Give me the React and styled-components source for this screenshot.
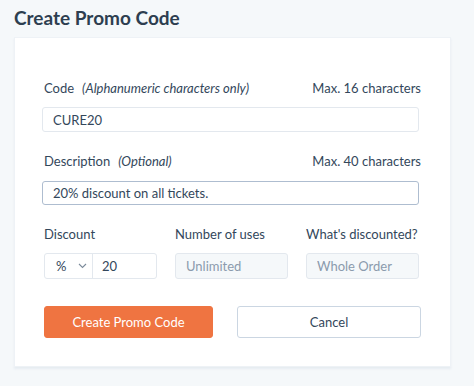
import React from 'react'
import styled, { createGlobalStyle } from 'styled-components'

const GlobalStyle = createGlobalStyle`
  body {
    margin: 0;
    background: #f5f8fa;
    font-family: Lato, "Open Sans", sans-serif;
    color: #33475b;
  }
`

const Page = styled.main`
  padding: 6px 23px 19px 14px;
`

const Title = styled.h1`
  margin: 0 0 7px;
  font-size: 19px;
  font-weight: 700;
  color: #2d3e50;
  line-height: 24px;
`

const Card = styled.section`
  background: #fff;
  border: 1px solid #eef2f6;
  box-shadow: 0 2px 2px rgba(203, 214, 226, 0.35);
  padding: 42px 29px 28px 27px;
  display: flex;
  flex-direction: column;
`

const Field = styled.div`
  display: flex;
  flex-direction: column;
  gap: ${(p) => p.gap || 11}px;
  margin-bottom: 21px;
`

const LabelRow = styled.div`
  display: flex;
  justify-content: space-between;
  padding-left: 2px;
  font-size: 13px;
  line-height: 16px;
`

const Hint = styled.em`
  margin-left: 8px;
  font-style: italic;
`

const Input = styled.input`
  box-sizing: border-box;
  width: ${(p) => (p.narrow ? '100%' : '377px')};
  height: ${(p) => p.h || 25}px;
  border: 1px solid ${(p) => (p.focused ? '#aebdd0' : '#e3e8ee')};
  border-radius: 3px;
  background: ${(p) => (p.disabled ? '#f5f8fa' : '#fff')};
  color: ${(p) => (p.disabled ? '#8b9bad' : '#33475b')};
  font-family: inherit;
  font-size: 13px;
  padding: 0 10px;
  outline: none;
  &:disabled {
    -webkit-text-fill-color: #8b9bad;
    opacity: 1;
  }
`

const Grid = styled.div`
  display: grid;
  grid-template-columns: 113px 113px 113px;
  column-gap: 18px;
  margin-left: 2px;
  margin-bottom: 27px;
`

const Col = styled.div`
  display: flex;
  flex-direction: column;
  gap: 11px;
`

const ColLabel = styled.div`
  font-size: 13px;
  line-height: 16px;
`

const Combo = styled.div`
  display: flex;
  height: 26px;
  box-sizing: border-box;
  border: 1px solid #e3e8ee;
  border-radius: 3px;
`

const Select = styled.div`
  width: 48px;
  box-sizing: border-box;
  border-right: 1px solid #e3e8ee;
  display: flex;
  align-items: center;
  justify-content: space-between;
  padding: 0 5px 0 11px;
  font-size: 13px;
`

const ComboInput = styled.div`
  flex: 1;
  display: flex;
  align-items: center;
  padding-left: 9px;
  font-size: 13px;
`

const Buttons = styled.div`
  display: flex;
  gap: 24px;
  margin-left: 2px;
`

const Button = styled.button`
  height: 32px;
  border-radius: 3px;
  font-family: inherit;
  font-size: 13px;
  cursor: pointer;
  ${(p) =>
    p.primary
      ? `width: 169px; background: #ef7441; border: 1px solid #ef7441; color: #fff;`
      : `flex: 1; background: #fff; border: 1px solid #cbd6e2; color: #33475b;`}
`

const Chevron = () => (
  <svg width="9" height="6" viewBox="0 0 9 6" fill="none">
    <path d="M1 1l3.5 3.5L8 1" stroke="#7c8b9b" strokeWidth="1.1" />
  </svg>
)

export default function App() {
  return (
    <>
      <GlobalStyle />
      <Page>
        <Title>Create Promo Code</Title>
        <Card>
          <Field>
            <LabelRow>
              <span>
                Code<Hint>(Alphanumeric characters only)</Hint>
              </span>
              <span>Max. 16 characters</span>
            </LabelRow>
            <Input defaultValue="CURE20" />
          </Field>
          <Field gap={12}>
            <LabelRow>
              <span>
                Description<Hint>(Optional)</Hint>
              </span>
              <span>Max. 40 characters</span>
            </LabelRow>
            <Input focused h={24} defaultValue="20% discount on all tickets." />
          </Field>
          <Grid>
            <Col>
              <ColLabel>Discount</ColLabel>
              <Combo>
                <Select>
                  %<Chevron />
                </Select>
                <ComboInput>20</ComboInput>
              </Combo>
            </Col>
            <Col>
              <ColLabel>Number of uses</ColLabel>
              <Input narrow h={26} disabled value="Unlimited" />
            </Col>
            <Col>
              <ColLabel>What's discounted?</ColLabel>
              <Input narrow h={26} disabled value="Whole Order" />
            </Col>
          </Grid>
          <Buttons>
            <Button primary>Create Promo Code</Button>
            <Button>Cancel</Button>
          </Buttons>
        </Card>
      </Page>
    </>
  )
}
